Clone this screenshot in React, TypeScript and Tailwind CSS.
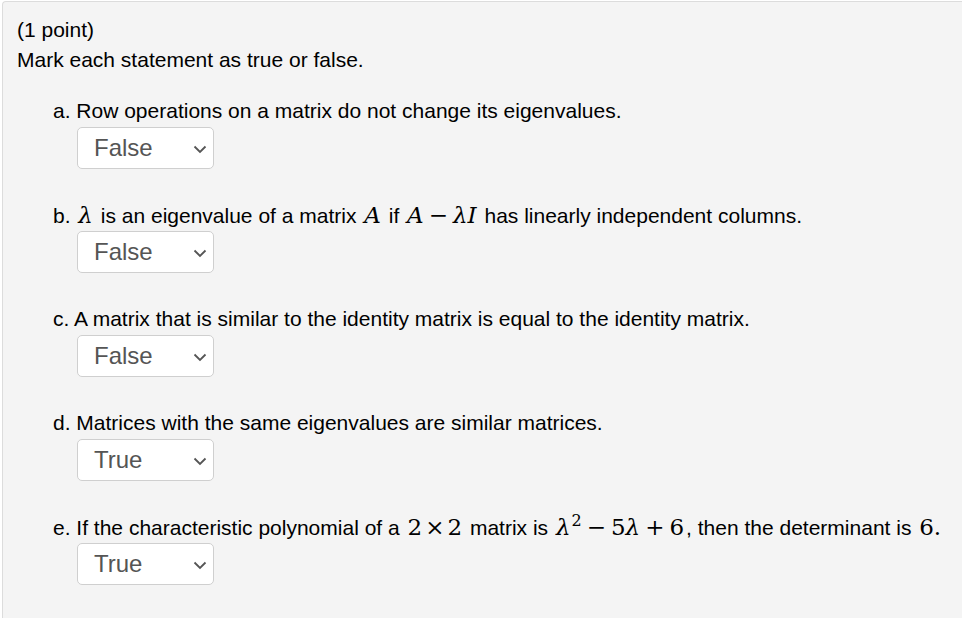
import React from "react";

const serif = '"DejaVu Serif", "Liberation Serif", serif';
const Math = ({ children, noRight }: { children: React.ReactNode; noRight?: boolean }) => (
  <span className={(noRight ? "ml-[2px]" : "mx-[2px]") + " leading-[30px]"} style={{ fontFamily: serif }}>{children}</span>
);
const M = ({ children }: { children: React.ReactNode }) => (
  <span className="text-[23px] italic leading-[30px]" style={{ fontFamily: serif }}>{children}</span>
);
const N = ({ children }: { children: React.ReactNode }) => (
  <span className="text-[23px] leading-[30px]" style={{ fontFamily: serif }}>{children}</span>
);
const Op = ({ children, wide }: { children: React.ReactNode; wide?: boolean }) => (
  <span className={(wide ? "mx-[5px]" : "mx-[3px]") + " inline-block text-[23px] leading-[30px]"} style={{ fontFamily: serif }}>{children}</span>
);

const Select = ({ value }: { value: string }) => (
  <div className="mt-px ml-[24px] flex h-[42px] w-[137px] items-center justify-between rounded-[5px] border border-[#cfcfcf] bg-white pl-[16px] pr-[6px] text-[24px] leading-none text-[#555]">
    <span>{value}</span>
    <svg width="14" height="9" viewBox="0 0 14 9" className="mt-[2px]">
      <path d="M1.5 1.5 L7 7 L12.5 1.5" fill="none" stroke="#555" strokeWidth="1.8" />
    </svg>
  </div>
);

const items: { label: React.ReactNode; value: string }[] = [
  { label: <>a. Row operations on a matrix do not change its eigenvalues.</>, value: "False" },
  {
    label: (
      <>
        {"b. "}<Math><M>λ</M></Math>{" is an eigenvalue of a matrix "}<Math><M>A</M></Math>{" if "}
        <Math><M>A</M><Op wide>−</Op><M>λI</M></Math>{" has linearly independent columns."}
      </>
    ),
    value: "False",
  },
  { label: <>c. A matrix that is similar to the identity matrix is equal to the identity matrix.</>, value: "False" },
  { label: <>d. Matrices with the same eigenvalues are similar matrices.</>, value: "True" },
  {
    label: (
      <>
        {"e. If the characteristic polynomial of a "}<Math><N>2</N><Op>×</Op><N>2</N></Math>{" matrix is "}
        <Math>
          <M>λ</M>
          <span className="relative -top-[9px] ml-[1px] text-[16px] leading-none" style={{ fontFamily: serif }}>2</span>
          <Op wide>−</Op>
          <N>5</N>
          <M>λ</M>
          <Op wide>+</Op>
          <N>6</N>
        </Math>
        {", then the determinant is "}<Math noRight><N>6.</N></Math>
      </>
    ),
    value: "True",
  },
];

export default function App() {
  return (
    <div className="min-h-[618px] w-[962px] bg-white pl-[2px] pt-px" style={{ fontFamily: '"Liberation Sans", Arial, sans-serif' }}>
      <div className="h-[617px] rounded-tl-[4px] border-l border-t border-[#dcdcdc] bg-[#f4f4f4] pl-[14px] pt-[13px] text-[21px] text-black">
        <div className="leading-[30px]">(1 point)</div>
        <div className="leading-[30px]">Mark each statement as true or false.</div>
        <div className="mt-[21px] flex flex-col gap-[31px] pl-[36px]">
          {items.map((it, i) => (
            <div key={i}>
              <div className="h-[30px] whitespace-pre leading-[30px]">{it.label}</div>
              <Select value={it.value} />
            </div>
          ))}
        </div>
      </div>
    </div>
  );
}
